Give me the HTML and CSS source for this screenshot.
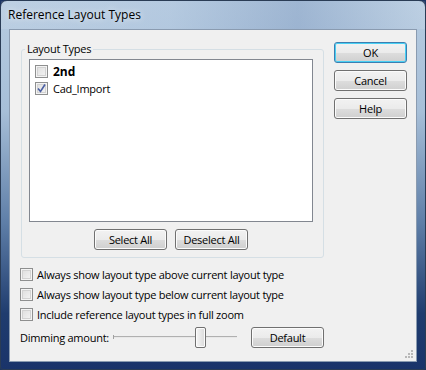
FILE: index.html
```html
<!DOCTYPE html>
<html lang="en">
<head>
  <meta charset="UTF-8">
  <meta name="viewport" content="width=device-width, initial-scale=1.0">
  <link rel="stylesheet" href="styles.css">
</head>
<body>

  <div class="window">
    <div class="titlebar">Reference Layout Types</div>

    <div class="client">
      <div class="top">
        <div class="group">
          <span class="legend">Layout Types</span>

          <div class="listbox">
            <div class="item">
              <span class="check"></span>
              <b>2nd</b>
            </div>
            <div class="item">
              <span class="check checked">
                <svg width="9" height="9" viewBox="0 0 9 9"><path d="M1 4.5 L3.5 7.5 L8 0.5" fill="none" stroke="#4a5fa3" stroke-width="1.6"/></svg>
              </span>
              Cad_Import
            </div>
          </div>

          <div class="list-buttons">
            <button type="button">Select All</button>
            <button type="button">Deselect All</button>
          </div>
        </div>

        <div class="side-buttons">
          <button type="button" class="default">OK</button>
          <button type="button">Cancel</button>
          <button type="button">Help</button>
        </div>
      </div>

      <div class="options">
        <div class="option"><span class="check"></span>Always show layout type above current layout type</div>
        <div class="option"><span class="check"></span>Always show layout type below current layout type</div>
        <div class="option"><span class="check"></span>Include reference layout types in full zoom</div>
      </div>

      <div class="dimming">
        <span class="dim-label">Dimming amount:</span>
        <div class="slider">
          <div class="track"></div>
          <div class="thumb"></div>
        </div>
        <button type="button">Default</button>
      </div>

      <svg class="grip" width="9" height="9" viewBox="0 0 9 9">
        <g fill="#b8b8b8">
          <rect x="6" y="0" width="2" height="2"/>
          <rect x="3" y="3" width="2" height="2"/>
          <rect x="6" y="3" width="2" height="2"/>
          <rect x="0" y="6" width="2" height="2"/>
          <rect x="3" y="6" width="2" height="2"/>
          <rect x="6" y="6" width="2" height="2"/>
        </g>
      </svg>
    </div>
  </div>

</body>
</html>
```

FILE: styles.css
```css
body {
  margin: 0;
  background: #1c3563;
  font-family: "Open Sans", "Liberation Sans", sans-serif;
  font-size: 11px;
  letter-spacing: -0.25px;
  color: #000;
}

.window {
  width: 426px;
  height: 370px;
  box-sizing: border-box;
  padding: 0 8px 8px 8px;
  border: 1px solid #2a3c55;
  border-radius: 7px 7px 3px 3px;
  background: linear-gradient(to bottom, #b6cbe0 0%, #a7bfd8 30%, #5f7fa8 60%, #1f3c6e 85%, #1a346a 100%);
}

.titlebar {
  height: 28px;
  line-height: 28px;
  font-size: 12px;
  letter-spacing: 0;
  color: #000;
  text-shadow: 0 0 6px rgba(255, 255, 255, 0.9);
  background: linear-gradient(to right, rgba(255,255,255,0.1), rgba(180,200,225,0.3) 40%, rgba(90,120,170,0.25) 70%, rgba(255,255,255,0.1));
  margin: 0 -8px;
  padding: 0 0 0 7px;
}

.client {
  position: relative;
  height: 333px;
  box-sizing: border-box;
  background: #f0f0f0;
  border: 1px solid #8a9bb0;
  padding-left: 10px;
}

.top {
  display: flex;
}

.group {
  position: relative;
  width: 303px;
  height: 209px;
  box-sizing: border-box;
  margin-top: 19px;
  margin-left: 1px;
  border: 1px solid #d5dfe5;
  border-radius: 3px;
  padding: 9px 0 0 7px;
}

.legend {
  position: absolute;
  top: -9px;
  left: 3px;
  padding: 0 2px;
  background: #f0f0f0;
  line-height: 16px;
}

.listbox {
  width: 284px;
  height: 163px;
  box-sizing: border-box;
  background: #fff;
  border: 1px solid #828790;
  padding: 3px 5px;
}

.item {
  display: flex;
  align-items: center;
  gap: 5px;
  height: 17px;
}

.item b {
  font-size: 12px;
  letter-spacing: 0;
}

.check {
  display: flex;
  align-items: center;
  justify-content: center;
  width: 13px;
  height: 13px;
  box-sizing: border-box;
  border: 1px solid #8e8f8f;
  background: linear-gradient(135deg, #dcdcdc, #f6f6f6);
  box-shadow: inset 0 0 0 1px #f4f4f4, inset 0 0 0 2px #d2d2d2;
  flex: none;
}

.list-buttons {
  display: flex;
  justify-content: center;
  gap: 8px;
  width: 284px;
  margin-top: 7px;
}

button {
  width: 73px;
  height: 21px;
  padding: 0;
  font-family: "Open Sans", "Liberation Sans", sans-serif;
  font-size: 11px;
  letter-spacing: -0.25px;
  color: #000;
  border: 1px solid #707070;
  border-radius: 3px;
  background: linear-gradient(to bottom, #f2f2f2 0%, #ebebeb 50%, #dddddd 51%, #cfcfcf 100%);
  box-shadow: inset 0 0 0 1px #fbfbfb;
}

button.default {
  border-color: #3c7fb1;
  box-shadow: inset 0 0 0 1px #48d0f4;
}

.side-buttons {
  display: flex;
  flex-direction: column;
  gap: 7px;
  margin-left: 10px;
  margin-top: 12px;
}

.options {
  margin-top: 6px;
}

.option {
  display: flex;
  align-items: center;
  gap: 4px;
  height: 20px;
}

.dimming {
  display: flex;
  align-items: center;
  margin-top: 3px;
  height: 21px;
}

.dim-label {
  width: 93px;
}

.slider {
  position: relative;
  width: 124px;
  height: 21px;
}

.track {
  position: absolute;
  left: 0;
  right: 0;
  top: 9px;
  height: 2px;
  background: #b0b0b0;
  border-bottom: 1px solid #e8e8e8;
  box-sizing: border-box;
}

.track::before {
  content: "";
  position: absolute;
  left: 0;
  top: -1px;
  width: 1px;
  height: 4px;
  background: #a0a0a0;
}

.thumb {
  position: absolute;
  left: 82px;
  top: 0;
  width: 11px;
  height: 21px;
  box-sizing: border-box;
  border: 1px solid #707070;
  border-radius: 2px;
  background: linear-gradient(to right, #f6f6f6, #dadada);
  box-shadow: inset 0 0 0 1px #fcfcfc;
}

.dimming button {
  margin-left: 14px;
}

.grip {
  position: absolute;
  right: 2px;
  bottom: 2px;
}
```
